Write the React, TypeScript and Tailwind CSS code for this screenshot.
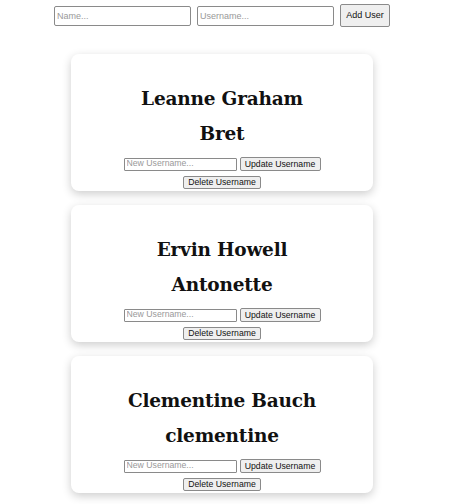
import React, { useState } from 'react';

interface User {
  id: number;
  name: string;
  username: string;
}

const INITIAL: User[] = [
  { id: 1, name: 'Leanne Graham', username: 'Bret' },
  { id: 2, name: 'Ervin Howell', username: 'Antonette' },
  { id: 3, name: 'Clementine Bauch', username: 'clementine' },
];

const sans = "font-['Liberation_Sans',Arial,sans-serif]";

function UserCard({ user }: { user: User }) {
  return (
    <div className="w-[302px] h-[137px] rounded-[8px] bg-white shadow-[0_3px_10px_rgba(0,0,0,0.2)] flex flex-col items-center">
      <h1 className="mt-[27px] h-[35px] leading-[35px] text-[18.5px] font-bold text-[#111] font-['DejaVu_Serif',Georgia,serif] tracking-[-0.2px]">
        {user.name}
      </h1>
      <h2 className="h-[35px] leading-[35px] text-[18.5px] font-bold text-[#111] font-['DejaVu_Serif',Georgia,serif] tracking-[-0.2px]">
        {user.username}
      </h2>
      <div className={`mt-[6px] flex items-center gap-[3px] ${sans}`}>
        <input
          placeholder="New Username..."
          className="w-[113px] h-[13px] border border-[#8a8a8a] rounded-[1px] px-[2px] text-[8.7px] placeholder:text-[#999] outline-none"
        />
        <button className="w-[81px] h-[14px] bg-[#efefef] border border-[#8a8a8a] rounded-[2px] text-[8.7px] leading-none text-[#111]">
          Update Username
        </button>
      </div>
      <button className={`mt-[5px] w-[78px] h-[13px] bg-[#efefef] border border-[#8a8a8a] rounded-[2px] text-[8.7px] leading-none text-[#111] ${sans}`}>
        Delete Username
      </button>
    </div>
  );
}

export default function App() {
  const [users] = useState<User[]>(INITIAL);

  return (
    <div className="w-[474px] h-[504px] bg-white overflow-hidden">
      {/* Add user form */}
      <div className={`flex items-center gap-[6px] pl-[54px] pt-[4px] ${sans}`}>
        <input
          placeholder="Name..."
          className="w-[137px] h-[20px] border border-[#8a8a8a] rounded-[2px] px-[2px] text-[9px] placeholder:text-[#999] outline-none"
        />
        <input
          placeholder="Username..."
          className="w-[137px] h-[20px] border border-[#8a8a8a] rounded-[2px] px-[2px] text-[9px] placeholder:text-[#999] outline-none"
        />
        <button className="w-[50px] h-[23px] bg-[#efefef] border border-[#8a8a8a] rounded-[2px] text-[9px] text-[#111]">
          Add User
        </button>
      </div>

      {/* Users */}
      <div className="flex flex-col gap-[14px] pl-[71px] mt-[27px]">
        {users.map(u => (
          <UserCard key={u.id} user={u} />
        ))}
      </div>
    </div>
  );
}
